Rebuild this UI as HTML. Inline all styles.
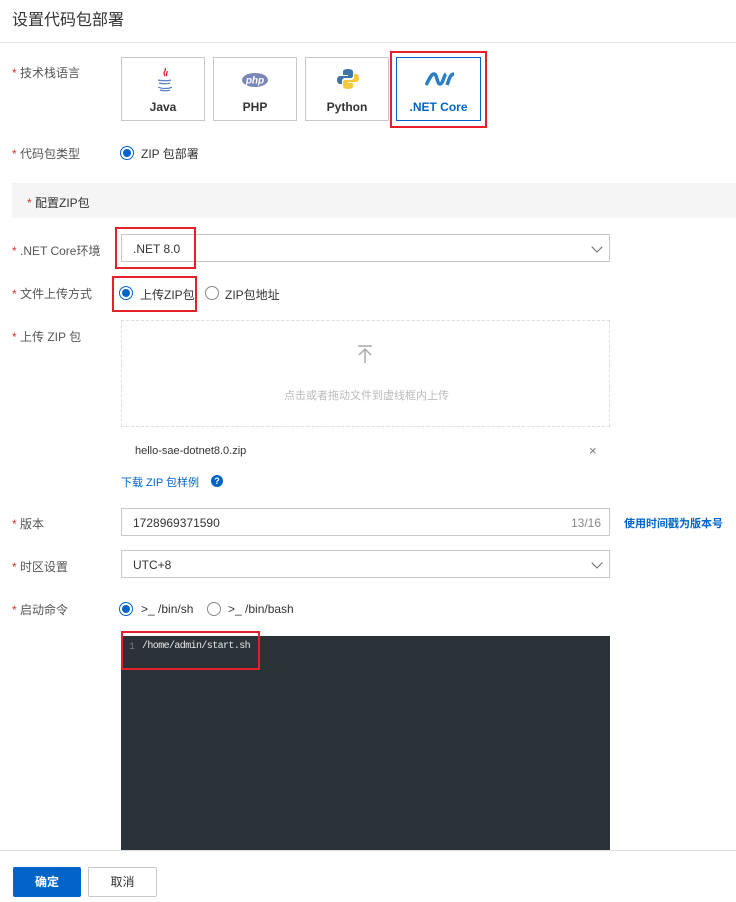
<!DOCTYPE html>
<html><head><meta charset="utf-8"><style>
*{box-sizing:border-box;margin:0;padding:0}
body{width:736px;height:902px;overflow:hidden;background:#fff;font-family:"Liberation Sans","Noto Sans CJK SC",sans-serif;font-size:12px;color:#333;position:relative}
.a{position:absolute}
.lbl{position:absolute;left:12px;color:#555}
.lbl:before{content:"* ";color:#d93026}
.card{position:absolute;top:57px;width:84px;height:64px;border:1px solid #c8c8c8;text-align:center;font-weight:bold;color:#333}
.card .t{position:absolute;left:0;right:0;top:42px;font-size:12px}
.red{position:absolute;border:2px solid #e5202a}
.inp{position:absolute;left:121px;width:489px;height:28px;border:1px solid #c8c8c8;padding-left:11px;line-height:28px;color:#333}
.chev{position:absolute;right:8px;top:8px;width:8px;height:8px;border-right:1px solid #666;border-bottom:1px solid #666;transform:rotate(45deg)}
.rad{position:absolute;width:14px;height:14px;border-radius:50%;border:1px solid #888}
.rad.on{border-color:#0064c8}
.rad.on:after{content:"";position:absolute;left:2px;top:2px;width:8px;height:8px;border-radius:50%;background:#0064c8}
</style></head><body>
<div class="a" style="left:12px;top:6px;font-size:16px;color:#333">设置代码包部署</div>
<div class="a" style="left:0;top:42px;width:736px;height:1px;background:#e3e3e3"></div>

<div class="lbl" style="top:64px">技术栈语言</div>
<div class="card" style="left:121px">
<svg class="a" style="left:32px;top:8px" width="22" height="28" viewBox="0 0 22 28"><path d="M11 2c2 3-3 4 0 8M13 5c1 2-2 3 0 5" stroke="#e5202a" fill="none" stroke-width="1.3"/><path d="M4 14c4 1 10 1 13 0M5 17c3 1 9 1 11 0M4 21c4 2 11 2 14 0M6 24c3 1 8 1 10 0" stroke="#5b82c2" fill="none" stroke-width="1.2"/></svg>
<div class="t">Java</div></div>
<div class="card" style="left:213px">
<svg class="a" style="left:27px;top:14px" width="28" height="16"><ellipse cx="14" cy="8" rx="13" ry="7" fill="#7a86b8"/><text x="14" y="11.5" font-size="10" font-style="italic" font-weight="bold" fill="#fff" text-anchor="middle" font-family="Liberation Sans">php</text></svg>
<div class="t">PHP</div></div>
<div class="card" style="left:305px">
<svg class="a" style="left:31px;top:10px" width="22" height="22" viewBox="0 0 22 22"><path d="M11 1c-5 0-5 2-5 3v3h5v1H3c-2 0-3 2-3 4s1 4 3 4h2v-3c0-2 2-3 3-3h6c1 0 2-1 2-2V4c0-2-2-3-5-3z" fill="#3f74a8"/><path d="M11 21c5 0 5-2 5-3v-3h-5v-1h8c2 0 3-2 3-4s-1-4-3-4h-2v3c0 2-2 3-3 3H8c-1 0-2 1-2 2v4c0 2 2 3 5 3z" fill="#f5c93b"/></svg>
<div class="t">Python</div></div>
<div class="card" style="left:396px;width:85px;border-color:#0064c8;color:#0064c8">
<svg class="a" style="left:28px;top:14px" width="30" height="14" viewBox="0 0 30 14"><path d="M1 13 C4 8 6 2 9 2 C12 2 12 12 15 12 C18 12 19 3 21 2 M22 13 C24 8 25 2 29 2" stroke="#2a7fc8" stroke-width="3.5" fill="none"/></svg>
<div class="t">.NET Core</div></div>
<div class="red" style="left:390px;top:51px;width:97px;height:77px"></div>

<div class="lbl" style="top:145px">代码包类型</div>
<div class="rad on" style="left:120px;top:146px"></div>
<div class="a" style="left:141px;top:145px">ZIP 包部署</div>

<div class="a" style="left:12px;top:183px;width:724px;height:35px;background:#f5f5f5"></div>
<div class="a" style="left:27px;top:194px;color:#333"><span style="color:#d93026">* </span>配置ZIP包</div>

<div class="lbl" style="top:242px">.NET Core环境</div>
<div class="inp" style="top:234px">.NET 8.0<div class="chev"></div></div>
<div class="red" style="left:115px;top:227px;width:81px;height:42px"></div>

<div class="lbl" style="top:285px">文件上传方式</div>
<div class="rad on" style="left:119px;top:286px"></div>
<div class="a" style="left:140px;top:286px">上传ZIP包</div>
<div class="rad" style="left:205px;top:286px"></div>
<div class="a" style="left:225px;top:286px">ZIP包地址</div>
<div class="red" style="left:112px;top:276px;width:85px;height:36px"></div>

<div class="lbl" style="top:328px">上传 ZIP 包</div>
<div class="a" style="left:121px;top:320px;width:489px;height:107px;border:1px dashed #ddd"></div>
<svg class="a" style="left:356px;top:344px" width="18" height="20"><path d="M2 2h14M9 5v14M3 11l6-6 6 6" stroke="#aaa" stroke-width="1.5" fill="none"/></svg>
<div class="a" style="left:284px;top:387px;color:#bbb;font-size:11px">点击或者拖动文件到虚线框内上传</div>
<div class="a" style="left:135px;top:445px;font-size:11px">hello-sae-dotnet8.0.zip</div>
<div class="a" style="left:589px;top:443px;color:#777;font-size:13px">×</div>
<div class="a" style="left:121px;top:474px;color:#0064c8;font-size:11px">下载 ZIP 包样例</div>
<div class="a" style="left:211px;top:475px;width:12px;height:12px;border-radius:50%;background:#0064c8;color:#fff;font-size:9px;font-weight:bold;text-align:center;line-height:12px">?</div>

<div class="lbl" style="top:515px">版本</div>
<div class="inp" style="top:508px">1728969371590<span class="a" style="right:8px;top:0;color:#888">13/16</span></div>
<div class="a" style="left:624px;top:515px;color:#0064c8;font-weight:bold;font-size:11px">使用时间戳为版本号</div>

<div class="lbl" style="top:558px">时区设置</div>
<div class="inp" style="top:550px">UTC+8<div class="chev"></div></div>

<div class="lbl" style="top:601px">启动命令</div>
<div class="rad on" style="left:119px;top:602px"></div>
<div class="a" style="left:141px;top:602px">&gt;_ /bin/sh</div>
<div class="rad" style="left:207px;top:602px"></div>
<div class="a" style="left:228px;top:602px">&gt;_ /bin/bash</div>

<div class="a" style="left:121px;top:636px;width:489px;height:214px;background:#2b3339"></div>
<div class="a" style="left:129px;top:642px;color:#777;font-family:'Liberation Mono',monospace;font-size:10px">1</div>
<div class="a" style="left:142px;top:641px;color:#e8e8e8;font-family:'Liberation Mono',monospace;font-size:10px;letter-spacing:-0.6px">/home/admin/start.sh</div>
<div class="red" style="left:121px;top:631px;width:139px;height:39px"></div>

<div class="a" style="left:0;top:850px;width:736px;height:1px;background:#ddd"></div>
<div class="a" style="left:13px;top:867px;width:68px;height:30px;background:#0064c8;border-radius:2px;color:#fff;font-weight:bold;text-align:center;line-height:30px">确定</div>
<div class="a" style="left:88px;top:867px;width:69px;height:30px;border:1px solid #c8c8c8;border-radius:2px;text-align:center;line-height:28px">取消</div>
</body></html>
